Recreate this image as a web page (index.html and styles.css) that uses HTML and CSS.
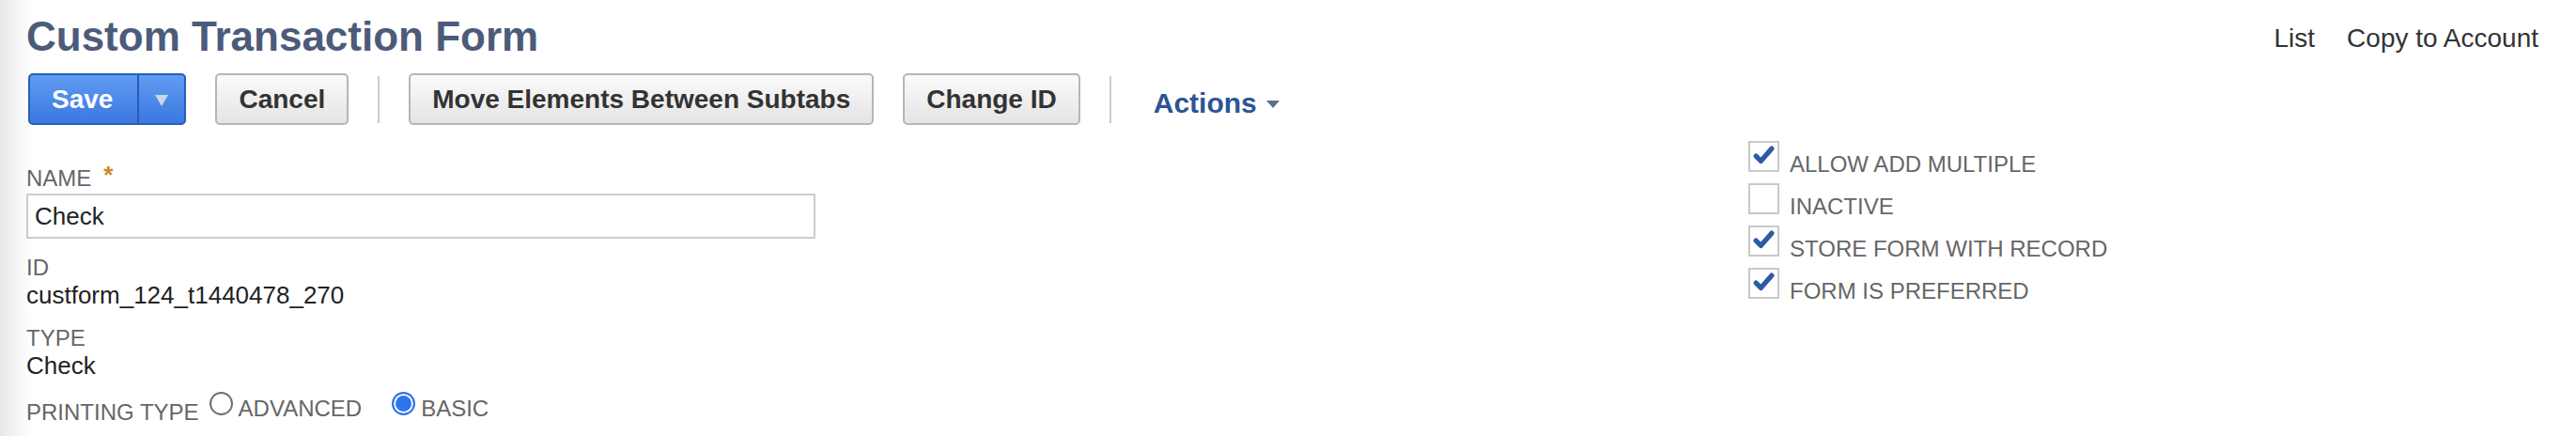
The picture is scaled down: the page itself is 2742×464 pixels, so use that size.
FILE: index.html
```html
<!DOCTYPE html>
<html lang="en">
<head>
    <meta charset="UTF-8">
    <title>Custom Transaction Form</title>
    <link rel="stylesheet" href="styles.css">
</head>
<body>
    <div class="header">
        <h1>Custom Transaction Form</h1>
        <div class="top-links">
            <a href="#">List</a>
            <a href="#">Copy to Account</a>
        </div>
    </div>

    <div class="toolbar">
        <div class="btn-split">
            <span class="btn-main">Save</span>
            <span class="btn-arrow"></span>
        </div>
        <button class="btn">Cancel</button>
        <span class="divider"></span>
        <button class="btn">Move Elements Between Subtabs</button>
        <button class="btn">Change ID</button>
        <span class="divider"></span>
        <a class="actions" href="#">Actions<span class="caret"></span></a>
    </div>

    <div class="main">
        <div class="left-col">
            <div class="field">
                <div class="label">NAME<span class="req">*</span></div>
                <input class="text-input" type="text" value="Check">
            </div>
            <div class="field">
                <div class="label">ID</div>
                <div class="value">custform_124_t1440478_270</div>
            </div>
            <div class="field">
                <div class="label">TYPE</div>
                <div class="value">Check</div>
            </div>
            <div class="print-row">
                <span class="label">PRINTING TYPE</span>
                <span class="radio"></span>
                <span class="radio-label">ADVANCED</span>
                <span class="radio checked"></span>
                <span class="radio-label">BASIC</span>
            </div>
        </div>

        <div class="right-col">
            <div class="check-row">
                <span class="checkbox"><svg viewBox="0 0 33 33"><path d="M7 16 L13 22 L26 7" /></svg></span>
                <span class="check-label">ALLOW ADD MULTIPLE</span>
            </div>
            <div class="check-row">
                <span class="checkbox"></span>
                <span class="check-label">INACTIVE</span>
            </div>
            <div class="check-row">
                <span class="checkbox"><svg viewBox="0 0 33 33"><path d="M7 16 L13 22 L26 7" /></svg></span>
                <span class="check-label">STORE FORM WITH RECORD</span>
            </div>
            <div class="check-row">
                <span class="checkbox"><svg viewBox="0 0 33 33"><path d="M7 16 L13 22 L26 7" /></svg></span>
                <span class="check-label">FORM IS PREFERRED</span>
            </div>
        </div>
    </div>
</body>
</html>
```

FILE: styles.css
```css
body {
    margin: 0;
    padding: 0 0 0 28px;
    height: 464px;
    overflow: hidden;
    font-family: "Liberation Sans", Arial, sans-serif;
    background: linear-gradient(to right, #e8e8e8 0, #fff 34px);
    color: #222;
}

.header {
    display: flex;
    justify-content: space-between;
    align-items: flex-start;
    padding: 14px 40px 0 0;
}

h1 {
    margin: 0;
    font-size: 44px;
    line-height: 50px;
    font-weight: bold;
    color: #4d5b7a;
}

.top-links {
    display: flex;
    gap: 34px;
    margin-top: 11px;
}

.top-links a {
    font-size: 28px;
    line-height: 32px;
    color: #333;
    text-decoration: none;
}

.toolbar {
    display: flex;
    align-items: flex-start;
    gap: 31px;
    margin-top: 14px;
    padding-left: 2px;
    height: 55px;
}

.btn-split {
    display: flex;
    height: 55px;
    box-sizing: border-box;
    border: 2px solid #2b5db4;
    border-radius: 5px;
    background: linear-gradient(#609cf3, #3a78df);
    color: #fff;
    font-size: 28px;
    font-weight: bold;
}

.btn-main {
    padding: 10px 26px 10px 23px;
    line-height: 31px;
}

.btn-arrow {
    width: 48px;
    border-left: 2px solid #2b5db4;
    position: relative;
}

.btn-arrow::after {
    content: "";
    position: absolute;
    left: 17px;
    top: 21px;
    border-left: 7px solid transparent;
    border-right: 7px solid transparent;
    border-top: 12px solid #cbd6e8;
}

.btn {
    height: 55px;
    box-sizing: border-box;
    padding: 10px 23px;
    border: 2px solid #b6b6b6;
    border-radius: 5px;
    background: linear-gradient(#fbfbfb, #e4e4e4);
    font-family: inherit;
    font-size: 28px;
    line-height: 31px;
    font-weight: bold;
    color: #333;
}

.divider {
    width: 2px;
    height: 50px;
    margin-top: 3px;
    background: #cccccc;
}

.actions {
    margin-left: 14px;
    padding-top: 15px;
    font-size: 30px;
    line-height: 34px;
    font-weight: bold;
    color: #2c5496;
    text-decoration: none;
    display: flex;
    align-items: flex-start;
}

.caret {
    margin: 14px 0 0 10px;
    border-left: 7px solid transparent;
    border-right: 7px solid transparent;
    border-top: 8px solid #5a6e8f;
}

.main {
    display: flex;
    margin-top: 17px;
}

.left-col {
    width: 1833px;
    padding-top: 25px;
}

.field + .field {
    margin-top: 17px;
}

.label {
    font-size: 24px;
    line-height: 28px;
    color: #666;
}

.req {
    margin-left: 13px;
    color: #c98a2c;
    font-size: 26px;
    font-weight: bold;
    position: relative;
    top: -3px;
}

.text-input {
    display: block;
    margin-top: 2px;
    width: 840px;
    height: 48px;
    box-sizing: border-box;
    padding: 0 7px;
    border: 2px solid #cccccc;
    font-family: inherit;
    font-size: 26px;
    color: #222;
    background: #fff;
}

.value {
    font-size: 26px;
    line-height: 30px;
    color: #222;
}

.print-row {
    display: flex;
    align-items: flex-start;
    margin-top: 13px;
}

.print-row .label {
    padding-top: 8px;
}

.radio {
    width: 25px;
    height: 25px;
    box-sizing: border-box;
    border: 2px solid #707070;
    border-radius: 50%;
    background: #fff;
    margin-left: 11px;
}

.radio.checked {
    margin-left: 32px;
    border: 2px solid #2f74ea;
    background: #2f74ea;
    box-shadow: inset 0 0 0 2px #fff;
}

.radio-label {
    margin: 4px 0 0 6px;
    font-size: 24px;
    line-height: 28px;
    color: #666;
}

.right-col {
    display: flex;
    flex-direction: column;
    gap: 6px;
}

.check-row {
    display: flex;
    align-items: flex-start;
    gap: 11px;
}

.checkbox {
    width: 33px;
    height: 33px;
    box-sizing: border-box;
    border: 2px solid #c9c9c9;
    background: #fff;
}

.checkbox svg {
    display: block;
    width: 29px;
    height: 29px;
}

.checkbox path {
    fill: none;
    stroke: #2d5aa3;
    stroke-width: 6;
    stroke-linecap: round;
    stroke-linejoin: round;
}

.check-label {
    margin-top: 11px;
    font-size: 24px;
    line-height: 28px;
    color: #666;
}
```
